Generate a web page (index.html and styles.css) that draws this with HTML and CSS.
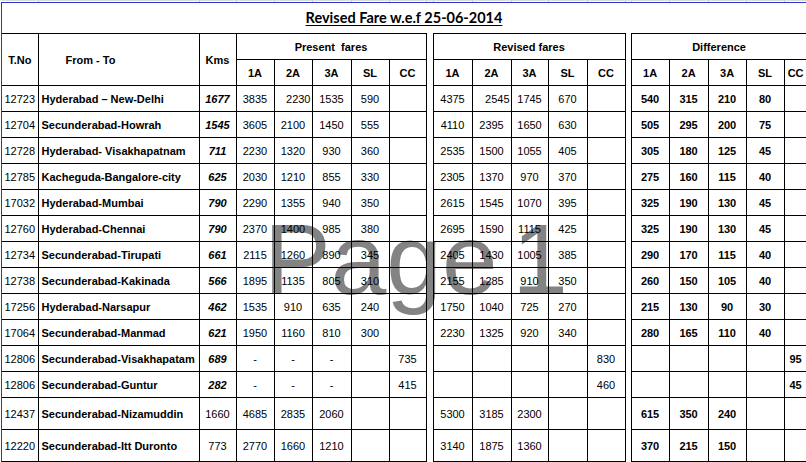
FILE: index.html
```html
<!DOCTYPE html>
<html>
<head>
<meta charset="utf-8">
<link rel="stylesheet" href="styles.css">
</head>
<body>
<div class="watermark">Page 1</div>
<div class="ticks">
  <span class="tk w37"></span><span class="tk w161"></span><span class="tk w37"></span>
  <span class="tk w38"></span><span class="tk w38"></span><span class="tk w39"></span><span class="tk w38"></span><span class="tk w37"></span><span class="tk w7"></span>
  <span class="tk w39"></span><span class="tk w39"></span><span class="tk w37"></span><span class="tk w39"></span><span class="tk w38"></span><span class="tk w6"></span>
  <span class="tk w38"></span><span class="tk w39"></span><span class="tk w38"></span><span class="tk w38"></span><span class="tk w23"></span>
</div>
<div class="frame">
  <div class="title"><span>Revised Fare w.e.f 25-06-2014</span></div>
  <table class="fares">
    <colgroup>
      <col class="c36"><col class="c161"><col class="c37">
      <col class="c38"><col class="c38"><col class="c39"><col class="c38"><col class="c37"><col class="c7">
      <col class="c39"><col class="c39"><col class="c37"><col class="c39"><col class="c38"><col class="c6">
      <col class="c38"><col class="c39"><col class="c38"><col class="c38"><col class="c23">
    </colgroup>
    <thead>
      <tr class="h">
        <th rowspan="2" class="first">T.No</th>
        <th rowspan="2" class="from">From - To</th>
        <th rowspan="2">Kms</th>
        <th colspan="5" class="pre">Present  fares</th>
        <th rowspan="2" class="gap"></th>
        <th colspan="5">Revised fares</th>
        <th rowspan="2" class="gap"></th>
        <th colspan="5">Difference</th>
      </tr>
      <tr class="h">
        <th>1A</th><th>2A</th><th>3A</th><th>SL</th><th>CC</th>
        <th>1A</th><th>2A</th><th>3A</th><th>SL</th><th>CC</th>
        <th>1A</th><th>2A</th><th>3A</th><th>SL</th><th>CC</th>
      </tr>
    </thead>
    <tbody>
      <tr><td class="first">12723</td><td class="route">Hyderabad – New-Delhi</td><td class="km">1677</td>
        <td>3835</td><td class="r">2230</td><td>1535</td><td>590</td><td></td><td class="gap"></td>
        <td>4375</td><td class="r">2545</td><td>1745</td><td>670</td><td></td><td class="gap"></td>
        <td class="d">540</td><td class="d">315</td><td class="d">210</td><td class="d">80</td><td class="d"></td></tr>
      <tr><td class="first">12704</td><td class="route">Secunderabad-Howrah</td><td class="km">1545</td>
        <td>3605</td><td>2100</td><td>1450</td><td>555</td><td></td><td class="gap"></td>
        <td>4110</td><td>2395</td><td>1650</td><td>630</td><td></td><td class="gap"></td>
        <td class="d">505</td><td class="d">295</td><td class="d">200</td><td class="d">75</td><td class="d"></td></tr>
      <tr><td class="first">12728</td><td class="route">Hyderabad- Visakhapatnam</td><td class="km">711</td>
        <td>2230</td><td>1320</td><td>930</td><td>360</td><td></td><td class="gap"></td>
        <td>2535</td><td>1500</td><td>1055</td><td>405</td><td></td><td class="gap"></td>
        <td class="d">305</td><td class="d">180</td><td class="d">125</td><td class="d">45</td><td class="d"></td></tr>
      <tr><td class="first">12785</td><td class="route">Kacheguda-Bangalore-city</td><td class="km">625</td>
        <td>2030</td><td>1210</td><td>855</td><td>330</td><td></td><td class="gap"></td>
        <td>2305</td><td>1370</td><td>970</td><td>370</td><td></td><td class="gap"></td>
        <td class="d">275</td><td class="d">160</td><td class="d">115</td><td class="d">40</td><td class="d"></td></tr>
      <tr><td class="first">17032</td><td class="route">Hyderabad-Mumbai</td><td class="km">790</td>
        <td>2290</td><td>1355</td><td>940</td><td>350</td><td></td><td class="gap"></td>
        <td>2615</td><td>1545</td><td>1070</td><td>395</td><td></td><td class="gap"></td>
        <td class="d">325</td><td class="d">190</td><td class="d">130</td><td class="d">45</td><td class="d"></td></tr>
      <tr><td class="first">12760</td><td class="route">Hyderabad-Chennai</td><td class="km">790</td>
        <td>2370</td><td>1400</td><td>985</td><td>380</td><td></td><td class="gap"></td>
        <td>2695</td><td>1590</td><td>1115</td><td>425</td><td></td><td class="gap"></td>
        <td class="d">325</td><td class="d">190</td><td class="d">130</td><td class="d">45</td><td class="d"></td></tr>
      <tr><td class="first">12734</td><td class="route">Secunderabad-Tirupati</td><td class="km">661</td>
        <td>2115</td><td>1260</td><td>890</td><td>345</td><td></td><td class="gap"></td>
        <td>2405</td><td>1430</td><td>1005</td><td>385</td><td></td><td class="gap"></td>
        <td class="d">290</td><td class="d">170</td><td class="d">115</td><td class="d">40</td><td class="d"></td></tr>
      <tr><td class="first">12738</td><td class="route">Secunderabad-Kakinada</td><td class="km">566</td>
        <td>1895</td><td>1135</td><td>805</td><td>310</td><td></td><td class="gap"></td>
        <td>2155</td><td>1285</td><td>910</td><td>350</td><td></td><td class="gap"></td>
        <td class="d">260</td><td class="d">150</td><td class="d">105</td><td class="d">40</td><td class="d"></td></tr>
      <tr><td class="first">17256</td><td class="route">Hyderabad-Narsapur</td><td class="km">462</td>
        <td>1535</td><td>910</td><td>635</td><td>240</td><td></td><td class="gap"></td>
        <td>1750</td><td>1040</td><td>725</td><td>270</td><td></td><td class="gap"></td>
        <td class="d">215</td><td class="d">130</td><td class="d">90</td><td class="d">30</td><td class="d"></td></tr>
      <tr><td class="first">17064</td><td class="route">Secunderabad-Manmad</td><td class="km">621</td>
        <td>1950</td><td>1160</td><td>810</td><td>300</td><td></td><td class="gap"></td>
        <td>2230</td><td>1325</td><td>920</td><td>340</td><td></td><td class="gap"></td>
        <td class="d">280</td><td class="d">165</td><td class="d">110</td><td class="d">40</td><td class="d"></td></tr>
      <tr><td class="first">12806</td><td class="route">Secunderabad-Visakhapatam</td><td class="km">689</td>
        <td>-</td><td>-</td><td>-</td><td></td><td>735</td><td class="gap"></td>
        <td></td><td></td><td></td><td></td><td>830</td><td class="gap"></td>
        <td class="d"></td><td class="d"></td><td class="d"></td><td class="d"></td><td class="d">95</td></tr>
      <tr><td class="first">12806</td><td class="route">Secunderabad-Guntur</td><td class="km">282</td>
        <td>-</td><td>-</td><td>-</td><td></td><td>415</td><td class="gap"></td>
        <td></td><td></td><td></td><td></td><td>460</td><td class="gap"></td>
        <td class="d"></td><td class="d"></td><td class="d"></td><td class="d"></td><td class="d">45</td></tr>
      <tr class="tall"><td class="first">12437</td><td class="route">Secunderabad-Nizamuddin</td><td>1660</td>
        <td>4685</td><td>2835</td><td>2060</td><td></td><td></td><td class="gap"></td>
        <td>5300</td><td>3185</td><td>2300</td><td></td><td></td><td class="gap"></td>
        <td class="d">615</td><td class="d">350</td><td class="d">240</td><td class="d"></td><td class="d"></td></tr>
      <tr class="tall"><td class="first">12220</td><td class="route">Secunderabad-Itt Duronto</td><td>773</td>
        <td>2770</td><td>1660</td><td>1210</td><td></td><td></td><td class="gap"></td>
        <td>3140</td><td>1875</td><td>1360</td><td></td><td></td><td class="gap"></td>
        <td class="d">370</td><td class="d">215</td><td class="d">150</td><td class="d"></td><td class="d"></td></tr>
    </tbody>
  </table>
</div>
</body>
</html>
```
FILE: styles.css
```css
html, body {
  margin: 0;
  padding: 0;
  background: #fff;
}
body {
  width: 806px;
  height: 462px;
  overflow: hidden;
  position: relative;
  font-family: "Liberation Sans", Arial, sans-serif;
  font-size: 11px;
  color: #000;
}
.watermark {
  position: absolute;
  left: 264px;
  top: 209px;
  font-family: "Liberation Sans", Arial, sans-serif;
  font-size: 100px;
  line-height: 1;
  word-spacing: -13px;
  color: #838383;
  white-space: nowrap;
  z-index: 0;
}
.ticks {
  display: flex;
  height: 2px;
  margin-left: 1px;
  border-top: 1px solid #dcdcdc;
  box-sizing: border-box;
  width: 805px;
  overflow: hidden;
}
.tk {
  flex: none;
  height: 1px;
  border-right: 1px solid #c8c8c8;
  box-sizing: border-box;
}
.tk:first-child { width: 38px; }
.w161 { width: 161px; }
.w37 { width: 37px; }
.w38 { width: 38px; }
.w39 { width: 39px; }
.w7 { width: 7px; }
.w6 { width: 6px; }
.w23 { width: 23px; }

.frame {
  position: relative;
  z-index: 1;
  margin-left: 1px;
  border-top: 1px solid #2a36c9;
  border-left: 1px solid #2a36c9;
  width: 804px;
  overflow: hidden;
}
.title {
  height: 30px;
  line-height: 30px;
  width: 804px;
  text-align: center;
  font-family: Lato, "Open Sans", sans-serif;
  font-weight: bold;
  font-size: 14.5px;
}
.title span {
  text-decoration: underline;
  text-underline-offset: 2px;
}
.fares {
  border-collapse: collapse;
  table-layout: fixed;
  width: 805px;
}
.c36 { width: 36px; }
.c161 { width: 161px; }
.c37 { width: 37px; }
.c38 { width: 38px; }
.c39 { width: 39px; }
.c7 { width: 7px; }
.c6 { width: 6px; }
.c23 { width: 23px; }

.fares th, .fares td {
  border: 1px solid #000;
  padding: 0;
  text-align: center;
  vertical-align: middle;
  white-space: nowrap;
  overflow: hidden;
}
.fares th {
  font-weight: bold;
}
.fares tr { height: 26px; }
.fares tr.tall { height: 32px; }
.fares .first { border-left: none; }
.fares th.from {
  text-align: left;
  padding-left: 27px;
}
.fares th.pre { white-space: pre; }
.fares .gap {
  border-top: none;
  border-bottom: none;
}
.fares td.route {
  text-align: left;
  padding-left: 3px;
  font-weight: bold;
}
.fares td.km {
  font-weight: bold;
  font-style: italic;
}
.fares td.r {
  text-align: right;
  padding-right: 1px;
}
.fares td.d { font-weight: bold; }
```
